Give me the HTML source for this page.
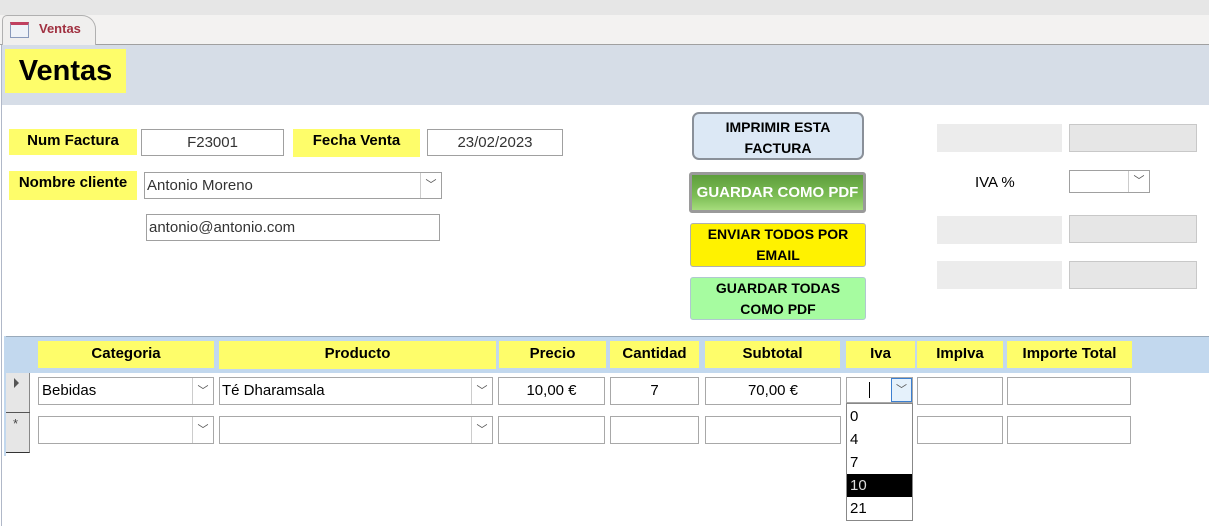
<!DOCTYPE html>
<html><head><meta charset="utf-8"><style>
*{box-sizing:border-box;margin:0;padding:0}
body{width:1209px;height:526px;background:#fff;font-family:"Liberation Sans",sans-serif;position:relative;overflow:hidden}
.a{position:absolute}
.y{background:#fefd6a;font-weight:bold;font-size:15px;text-align:center;color:#000}
.in{border:1px solid #a0a0a0;background:#fff;font-size:15px;color:#333}
.dd{position:absolute;right:0;top:0;bottom:0;width:21px;border-left:1px solid #ccc;font-size:11px;color:#555;text-align:center;line-height:24px}
.h{background:#fefd6a;font-weight:bold;font-size:15px;text-align:center;line-height:26px}
.c{border:1px solid #a8a8a8;background:#fff;font-size:15px;height:28px;line-height:26px}
.g{background:#e6e6e6;border:1px solid #c8c8c8}
.btn{font-weight:bold;font-size:14px;text-align:center;border-radius:3px;line-height:21px}
</style></head><body>
<div class="a" style="left:0;top:0;width:1209px;height:15px;background:#e6e6e6"></div>
<div class="a" style="left:0;top:15px;width:1209px;height:30px;background:#f3f2f1;border-bottom:1px solid #a0a0a0"></div>
<div class="a" style="left:2px;top:15px;width:94px;height:30px;background:#f0efee;border:1px solid #b0b0b0;border-bottom:none;border-radius:5px 14px 0 0"></div>
<div class="a" style="left:10px;top:22px;width:19px;height:16px;border:1px solid #8899bb;background:#eef2f8;border-top:3px solid #c04060"></div>
<div class="a" style="left:39px;top:21px;font-size:13px;font-weight:bold;color:#a03040">Ventas</div>
<div class="a" style="left:1px;top:45px;width:1208px;height:481px;border-left:1px solid #b0b8c8"></div>
<div class="a" style="left:2px;top:45px;width:1207px;height:60px;background:#d6dde7"></div>
<div class="a y" style="left:5px;top:49px;width:121px;height:44px;font-size:29px;line-height:44px">Ventas</div>

<div class="a y" style="left:9px;top:129px;width:128px;height:26px;line-height:24px">Num Factura</div>
<div class="a in" style="left:141px;top:129px;width:143px;height:27px;text-align:center;line-height:25px">F23001</div>
<div class="a y" style="left:293px;top:129px;width:127px;height:28px;line-height:24px">Fecha Venta</div>
<div class="a in" style="left:427px;top:129px;width:136px;height:27px;text-align:center;line-height:25px">23/02/2023</div>
<div class="a y" style="left:9px;top:171px;width:128px;height:29px;line-height:24px">Nombre cliente</div>
<div class="a in" style="left:144px;top:172px;width:298px;height:27px;line-height:25px;padding-left:2px">Antonio Moreno<div class="dd">﹀</div></div>
<div class="a in" style="left:146px;top:214px;width:294px;height:27px;line-height:25px;padding-left:2px">antonio@antonio.com</div>

<div class="a btn" style="left:692px;top:112px;width:172px;height:48px;background:#dce8f5;border:2px solid #8a9099;border-radius:7px;padding-top:3px">IMPRIMIR ESTA<br>FACTURA</div>
<div class="a btn" style="left:689px;top:172px;width:177px;height:41px;background:linear-gradient(#5e9e3c,#7cbd55 60%,#a6dc7c);border:3px solid #9a9a9a;color:#fff;font-size:15px;line-height:35px">GUARDAR COMO PDF</div>
<div class="a btn" style="left:690px;top:223px;width:176px;height:44px;background:#fff200;border:1px solid #b0b0b0">ENVIAR TODOS POR<br>EMAIL</div>
<div class="a btn" style="left:690px;top:277px;width:176px;height:43px;background:#a6fca0;border:1px solid #b0c8d0">GUARDAR TODAS<br>COMO PDF</div>

<div class="a g" style="left:937px;top:124px;width:125px;height:28px;background:#ececec;border:none"></div>
<div class="a g" style="left:1069px;top:124px;width:128px;height:28px"></div>
<div class="a" style="left:975px;top:174px;font-size:15px">IVA %</div>
<div class="a in" style="left:1069px;top:170px;width:81px;height:23px"><div class="dd" style="line-height:20px">﹀</div></div>
<div class="a g" style="left:937px;top:216px;width:125px;height:28px;background:#ececec;border:none"></div>
<div class="a g" style="left:1069px;top:215px;width:128px;height:28px"></div>
<div class="a g" style="left:937px;top:261px;width:125px;height:28px;background:#ececec;border:none"></div>
<div class="a g" style="left:1069px;top:261px;width:128px;height:28px"></div>

<div class="a" style="left:4px;top:336px;width:1205px;height:37px;background:#c2d8ee;border-top:1px solid #9ab"></div>
<div class="a" style="left:4px;top:336px;width:2px;height:120px;background:#c2d8ee"></div>
<div class="a h" style="left:38px;top:341px;width:176px;height:27px">Categoria</div>
<div class="a h" style="left:219px;top:341px;width:277px;height:28px">Producto</div>
<div class="a h" style="left:499px;top:341px;width:107px;height:27px">Precio</div>
<div class="a h" style="left:610px;top:341px;width:89px;height:27px">Cantidad</div>
<div class="a h" style="left:705px;top:341px;width:135px;height:27px">Subtotal</div>
<div class="a h" style="left:846px;top:341px;width:69px;height:27px">Iva</div>
<div class="a h" style="left:917px;top:341px;width:86px;height:27px">ImpIva</div>
<div class="a h" style="left:1007px;top:341px;width:125px;height:27px">Importe Total</div>

<div class="a" style="left:6px;top:373px;width:24px;height:80px;background:#e6e6e6;border-right:1px solid #888;border-bottom:1px solid #333"></div>
<div class="a" style="left:6px;top:412px;width:24px;height:1px;background:#555"></div>
<div class="a" style="left:14px;top:378px;width:0;height:0;border-left:5px solid #555;border-top:5px solid transparent;border-bottom:5px solid transparent"></div>
<div class="a" style="left:13px;top:416px;font-size:13px;color:#444">*</div>

<div class="a c" style="left:38px;top:377px;width:176px;padding-left:3px">Bebidas<div class="dd" style="line-height:26px">﹀</div></div>
<div class="a c" style="left:219px;top:377px;width:274px;padding-left:2px">Té Dharamsala<div class="dd" style="line-height:26px">﹀</div></div>
<div class="a c" style="left:498px;top:377px;width:107px;text-align:center">10,00 €</div>
<div class="a c" style="left:610px;top:377px;width:89px;text-align:center">7</div>
<div class="a c" style="left:705px;top:377px;width:136px;text-align:center">70,00 €</div>
<div class="a c" style="left:846px;top:377px;width:67px;height:26px"><div class="a" style="left:22px;top:4px;width:1px;height:16px;background:#000"></div><div class="dd" style="background:#e5f1fb;border:1px solid #3c7fd0;line-height:22px">﹀</div></div>
<div class="a c" style="left:917px;top:377px;width:86px"></div>
<div class="a c" style="left:1007px;top:377px;width:124px"></div>

<div class="a c" style="left:38px;top:416px;width:176px"><div class="dd" style="line-height:26px">﹀</div></div>
<div class="a c" style="left:219px;top:416px;width:274px"><div class="dd" style="line-height:26px">﹀</div></div>
<div class="a c" style="left:498px;top:416px;width:107px"></div>
<div class="a c" style="left:610px;top:416px;width:89px"></div>
<div class="a c" style="left:705px;top:416px;width:136px"></div>
<div class="a c" style="left:917px;top:416px;width:86px"></div>
<div class="a c" style="left:1007px;top:416px;width:124px"></div>

<div class="a" style="left:846px;top:403px;width:67px;height:118px;background:#fff;border:1px solid #888;font-size:15px;line-height:23px">
<div style="padding-left:3px;height:23px;margin-top:1px">0</div>
<div style="padding-left:3px;height:23px">4</div>
<div style="padding-left:3px;height:23px">7</div>
<div style="padding-left:3px;height:23px;background:#000;color:#ddd">10</div>
<div style="padding-left:3px;height:23px">21</div>
</div>
</body></html>
